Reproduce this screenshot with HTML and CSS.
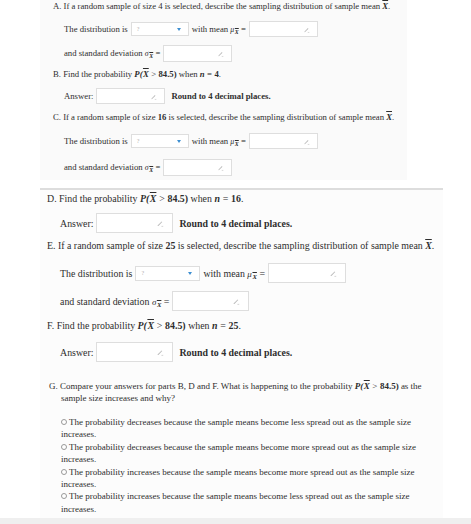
FILE: index.html
```html
<!DOCTYPE html>
<html>
<head>
<meta charset="utf-8">
<link rel="stylesheet" href="styles.css">
</head>
<body>
<svg class="defs" width="0" height="0">
  <symbol id="pen" viewBox="0 0 10 10">
    <path d="M2.2 7.8 L7 3 L7.8 3.8 L3 8.6 L2 8.8 Z" fill="#b9b9b9"/>
    <path d="M6.8 9.2 H9" stroke="#c4c4c4" stroke-width="0.9"/>
  </symbol>
</svg>

<section class="panel panel-top">
  <p class="q">A. If a random sample of size 4 is selected, describe the sampling distribution of sample mean <span class="xbar">X</span>.</p>
  <div class="row s-dist1">
    <span>The distribution is</span>
    <span class="select"><span class="ph">?</span><span class="caret"></span></span>
    <span>with mean <span class="sym">μ<sub><span class="xbar">X</span></sub></span><span class="op">=</span></span>
    <span class="input w-mean"><svg class="pen"><use href="#pen"/></svg></span>
  </div>
  <div class="row s-std1">
    <span>and standard deviation <span class="sym">σ<sub><span class="xbar">X</span></sub></span><span class="op">=</span></span>
    <span class="input w-std"><svg class="pen"><use href="#pen"/></svg></span>
  </div>
  <p class="q s-b">B. Find the probability <b class="m">P(<span class="xbar">X</span></b><span class="op">&gt;</span><b>84.5)</b> when <b class="m">n</b><span class="op">=</span><b>4</b>.</p>
  <div class="row s-ans1">
    <span>Answer:</span>
    <span class="input w-ans"><svg class="pen"><use href="#pen"/></svg></span>
    <b class="hint">Round to 4 decimal places.</b>
  </div>
  <p class="q s-c">C. If a random sample of size <b>16</b> is selected, describe the sampling distribution of sample mean <span class="xbar">X</span>.</p>
  <div class="row s-dist2">
    <span>The distribution is</span>
    <span class="select"><span class="ph">?</span><span class="caret"></span></span>
    <span>with mean <span class="sym">μ<sub><span class="xbar">X</span></sub></span><span class="op">=</span></span>
    <span class="input w-mean"><svg class="pen"><use href="#pen"/></svg></span>
  </div>
  <div class="row s-std2">
    <span>and standard deviation <span class="sym">σ<sub><span class="xbar">X</span></sub></span><span class="op">=</span></span>
    <span class="input w-std"><svg class="pen"><use href="#pen"/></svg></span>
  </div>
</section>

<div class="divider"></div>

<section class="panel panel-bottom">
  <p class="q">D. Find the probability <b class="m">P(<span class="xbar">X</span></b><span class="op">&gt;</span><b>84.5)</b> when <b class="m">n</b><span class="op">=</span><b>16</b>.</p>
  <div class="row s-ans2">
    <span>Answer:</span>
    <span class="input w-ans"><svg class="pen"><use href="#pen"/></svg></span>
    <b class="hint">Round to 4 decimal places.</b>
  </div>
  <p class="q s-e">E. If a random sample of size <b>25</b> is selected, describe the sampling distribution of sample mean <span class="xbar">X</span>.</p>
  <div class="row s-dist3">
    <span>The distribution is</span>
    <span class="select"><span class="ph">?</span><span class="caret"></span></span>
    <span>with mean <span class="sym">μ<sub><span class="xbar">X</span></sub></span><span class="op">=</span></span>
    <span class="input w-mean"><svg class="pen"><use href="#pen"/></svg></span>
  </div>
  <div class="row s-std3">
    <span>and standard deviation <span class="sym">σ<sub><span class="xbar">X</span></sub></span><span class="op">=</span></span>
    <span class="input w-std"><svg class="pen"><use href="#pen"/></svg></span>
  </div>
  <p class="q s-f">F. Find the probability <b class="m">P(<span class="xbar">X</span></b><span class="op">&gt;</span><b>84.5)</b> when <b class="m">n</b><span class="op">=</span><b>25</b>.</p>
  <div class="row s-ans3">
    <span>Answer:</span>
    <span class="input w-ans"><svg class="pen"><use href="#pen"/></svg></span>
    <b class="hint">Round to 4 decimal places.</b>
  </div>

  <p class="q q-g"><span>G. Compare your answers for parts B, D and F. What is happening to the probability</span> <b class="m">P(<span class="xbar">X</span></b><span class="op">&gt;</span><b>84.5)</b> <span>as the</span> <span>sample size increases and why?</span></p>
  <ul class="options">
    <li><span class="radio"></span> The probability decreases because the sample means become less spread out as the sample size increases.</li>
    <li><span class="radio"></span> The probability decreases because the sample means become more spread out as the sample size increases.</li>
    <li><span class="radio"></span> The probability increases because the sample means become more spread out as the sample size increases.</li>
    <li><span class="radio"></span> The probability increases because the sample means become less spread out as the sample size increases.</li>
  </ul>
</section>

<div class="footer"></div>
</body>
</html>
```

FILE: styles.css
```css
* { box-sizing: border-box; }
html, body { margin: 0; padding: 0; }
body {
  width: 471px;
  height: 524px;
  overflow: hidden;
  background: #ffffff;
  color: #2e2e2e;
  font-family: "Liberation Serif", "Times New Roman", serif;
}
.defs { position: absolute; width: 0; height: 0; }

.panel { margin-left: 40px; }
.panel-top {
  width: 367px;
  height: 180px;
  background: #fafafa;
  padding: 0 0 0 13px;
  font-size: 8.7px;
}
.divider {
  margin: 8px 0 0 40px;
  width: 403px;
  height: 2px;
  background: #dddddd;
}
.panel-bottom {
  width: 403px;
  height: 328px;
  background: #fcfcfc;
  padding: 2px 0 0 7px;
  font-size: 9.9px;
}
.footer { height: 6px; background: #efefef; }

.q { margin: 0; line-height: 12px; white-space: nowrap; }
.panel-bottom .q { line-height: 14px; }

.row {
  display: flex;
  align-items: center;
  gap: 3px;
  white-space: nowrap;
}
.panel-top .row { margin-left: 11px; height: 16px; }
.panel-bottom .row { margin-left: 13px; height: 20px; }

/* vertical rhythm, top panel */
.s-dist1 { margin-top: 9px; }
.s-std1 { margin-top: 8px; }
.s-b { margin-top: 7px; }
.s-ans1 { margin-top: 8px; }
.s-c { margin-top: 7px; }
.s-dist2 { margin-top: 10px; }
.s-std2 { margin-top: 10px; }

/* vertical rhythm, bottom panel */
.s-ans2 { margin-top: 7px; }
.s-e { margin-top: 6px; }
.s-dist3 { margin-top: 10px; }
.s-std3 { margin-top: 8px; }
.s-f { margin-top: 8px; }
.s-ans3 { margin-top: 9px; }

.xbar { text-decoration: overline; font-style: italic; font-weight: bold; }
.m { font-style: italic; }
.m .xbar { margin-left: 0.05em; }
.op { display: inline-block; margin: 0 0.28em; text-indent: 0; }
.sym { font-style: italic; font-size: 0.9em; }
.sym sub { font-size: 0.75em; vertical-align: -0.35em; line-height: 0; margin-left: 0.1em; }
.row .op { margin: 0 0 0 0.25em; }

.input, .select {
  position: relative;
  display: inline-block;
  background: #ffffff;
  border: 1px solid #dedede;
  flex: none;
}
.panel-top .input { height: 16px; }
.panel-top .w-mean { width: 69px; }
.panel-top .w-std { width: 69px; height: 17px; }
.panel-top .w-ans { width: 69px; }
.panel-top .select { width: 58px; height: 14px; }

.panel-bottom .input { height: 20px; }
.panel-bottom .w-mean { width: 78px; }
.panel-bottom .w-std { width: 77px; }
.panel-bottom .w-ans { width: 77px; }
.panel-bottom .select { width: 65px; height: 15px; }

.pen {
  position: absolute;
  right: 7px;
  top: 50%;
  width: 7px;
  height: 7px;
  margin-top: -3px;
}
.panel-bottom .pen { width: 8px; height: 8px; margin-top: -4px; right: 8px; }

.ph {
  position: absolute;
  left: 5px;
  top: 50%;
  transform: translateY(-50%);
  color: #b0b0b0;
  font-size: 6px;
  line-height: 1;
}
.caret {
  position: absolute;
  right: 7px;
  top: 50%;
  margin-top: -1px;
  border-left: 2.5px solid transparent;
  border-right: 2.5px solid transparent;
  border-top: 3px solid #3d8fd1;
}

.row .w-ans + .hint { margin-left: 3px; }
.hint { font-weight: bold; }

.q-g {
  margin-top: 18px;
  margin-left: 2px;
  white-space: normal;
  width: 392px;
  padding-left: 12px;
  text-indent: -12px;
  font-size: 9px;
}
.panel-bottom .q-g { line-height: 12px; }
.q-g > span { white-space: nowrap; }
.options {
  list-style: none;
  margin: 12px 0 0 14px;
  padding: 0;
  width: 372px;
  font-size: 9px;
  line-height: 12.4px;
}
.radio {
  display: inline-block;
  width: 6px;
  height: 6px;
  border: 1px solid #999;
  border-radius: 50%;
  vertical-align: 0;
  background: #fff;
}
```
